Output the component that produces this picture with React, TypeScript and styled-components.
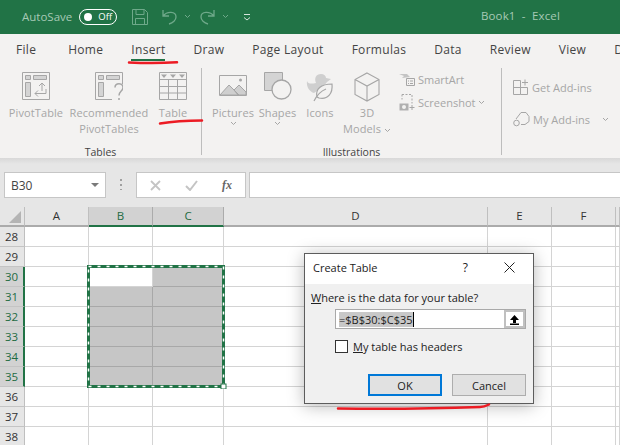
import React from 'react';
import styled, { createGlobalStyle } from 'styled-components';

const GlobalStyle = createGlobalStyle`
  * {
    margin: 0;
    padding: 0;
    box-sizing: border-box;
  }
  body {
    font-family: 'Open Sans', 'Noto Sans', sans-serif;
    background: #fff;
  }
`;

const Page = styled.div`
  position: relative;
  width: 620px;
  height: 445px;
  overflow: hidden;
  display: flex;
  flex-direction: column;
`;

const TitleBar = styled.div`
  height: 34px;
  flex: none;
  background: #217346;
  display: flex;
  align-items: center;
  padding-left: 22px;
  padding-bottom: 1px;
  color: #a6c9b5;
  font-size: 11.5px;
`;

const AutoSaveToggle = styled.div`
  width: 38px;
  height: 16px;
  margin-left: 7px;
  border: 1px solid #fff;
  border-radius: 8px;
  display: flex;
  align-items: center;
  padding-left: 4px;
  gap: 6px;
  color: #fff;
  font-size: 9.5px;
  &::before {
    content: '';
    width: 8px;
    height: 8px;
    border-radius: 50%;
    background: #fff;
  }
`;

const QuickIcon = styled.svg<{ $left: number }>`
  margin-left: ${(p) => p.$left}px;
  flex: none;
`;

const BookTitle = styled.div`
  margin-left: auto;
  margin-right: 60px;
  letter-spacing: 0.15px;
  white-space: pre;
  transform: translateY(-1px);
`;

const TabRow = styled.div`
  height: 31px;
  flex: none;
  background: #f3f2f1;
  display: flex;
  padding-left: 16px;
  gap: 28px;
  font-size: 12px;
  letter-spacing: 0.3px;
  color: #444;
  overflow: hidden;
`;

const Tab = styled.div<{ $active?: boolean; $gapAfter?: number }>`
  height: 27px;
  padding-top: 8px;
  line-height: 16px;
  white-space: nowrap;
  margin-right: ${(p) => p.$gapAfter ?? 0}px;
  ${(p) => p.$active && 'border-bottom: 2px solid #217346;'}
`;

const Ribbon = styled.div`
  height: 93px;
  flex: none;
  background: #f3f2f1;
  display: flex;
  padding-top: 3px;
  padding-bottom: 3px;
`;

const Group = styled.div<{ $w: number; $last?: boolean }>`
  width: ${(p) => p.$w}px;
  flex: none;
  display: flex;
  flex-direction: column;
  border-right: ${(p) => (p.$last ? 'none' : '1px solid #bdbdbd')};
`;

const GroupBody = styled.div<{ $left: number }>`
  flex: 1;
  display: flex;
  padding-left: ${(p) => p.$left}px;
  padding-top: 4px;
`;

const GroupLabel = styled.div`
  height: 12px;
  line-height: 18px;
  text-align: center;
  font-size: 10.5px;
  color: #444;
`;

const BigButton = styled.div<{ $w: number }>`
  width: ${(p) => p.$w}px;
  flex: none;
  display: flex;
  flex-direction: column;
  align-items: center;
  font-size: 11px;
  letter-spacing: 0.1px;
  line-height: 16px;
  color: #a6a6a6;
  text-align: center;
  white-space: nowrap;
`;

const BigIconSlot = styled.div`
  height: 30px;
  display: flex;
  justify-content: center;
  margin-bottom: 3px;
`;

const Chevron = styled.svg`
  vertical-align: middle;
`;

const SmallColumn = styled.div<{ $gap: number; $top: number; $left: number }>`
  display: flex;
  flex-direction: column;
  gap: ${(p) => p.$gap}px;
  margin-top: ${(p) => p.$top}px;
  padding-left: ${(p) => p.$left}px;
`;

const SmallButton = styled.div`
  height: 16px;
  display: flex;
  align-items: center;
  gap: 3px;
  font-size: 11px;
  color: #a6a6a6;
  white-space: nowrap;
`;

const FormulaArea = styled.div`
  height: 49px;
  flex: none;
  background: linear-gradient(#d8d8d8 0, #e6e6e6 6px);
  display: flex;
  padding: 14px 0 0 4px;
`;

const NameBox = styled.div`
  width: 102px;
  height: 26px;
  background: #fff;
  border: 1px solid #c6c6c6;
  display: flex;
  align-items: center;
  justify-content: space-between;
  padding: 0 6px 0 6px;
  font-size: 12px;
  color: #444;
  &::after {
    content: '';
    border-left: 4px solid transparent;
    border-right: 4px solid transparent;
    border-top: 4px solid #7a7a7a;
  }
`;

const Grip = styled.div`
  width: 2px;
  height: 11px;
  margin: 7px 14px 0 14px;
  background: repeating-linear-gradient(#a0a0a0 0 2px, transparent 2px 5px);
`;

const FormulaButtons = styled.div`
  width: 110px;
  height: 26px;
  background: #fff;
  border: 1px solid #c6c6c6;
  display: flex;
  align-items: center;
  padding-left: 13px;
  gap: 24px;
`;

const FxLabel = styled.span`
  font-family: 'Liberation Serif', serif;
  font-style: italic;
  font-weight: bold;
  font-size: 12px;
  color: #666;
`;

const FormulaInput = styled.div`
  flex: 1;
  height: 26px;
  margin-left: 3px;
  background: #fff;
  border: 1px solid #c6c6c6;
  border-right: none;
`;

const Sheet = styled.div`
  flex: 1;
  display: grid;
  grid-template-columns: 25px 64px 64px 71px 264px 64px 64px 4px;
  grid-auto-rows: 20px;
  background: #fff;
`;

const Corner = styled.div`
  background: #e6e6e6;
  border-right: 1px solid #bfbfbf;
  border-bottom: 2px solid #ababab;
  position: relative;
  &::after {
    content: '';
    position: absolute;
    right: 3px;
    bottom: 2px;
    border-left: 12px solid transparent;
    border-bottom: 12px solid #b4b4b4;
  }
`;

const ColHead = styled.div<{ $on?: boolean }>`
  background: ${(p) => (p.$on ? '#d2d2d2' : '#e6e6e6')};
  border-right: 1px solid ${(p) => (p.$on ? '#ababab' : '#bfbfbf')};
  border-bottom: 2px solid ${(p) => (p.$on ? '#217346' : '#ababab')};
  color: ${(p) => (p.$on ? '#1f6b42' : '#333')};
  font-size: 11.5px;
  line-height: 18px;
  text-align: center;
`;

const RowHead = styled.div<{ $on?: boolean }>`
  background: ${(p) => (p.$on ? '#d2d2d2' : '#e6e6e6')};
  border-right: ${(p) => (p.$on ? '2px solid #217346' : '1px solid #bfbfbf')};
  border-bottom: 1px solid #c4c4c4;
  color: ${(p) => (p.$on ? '#1f6b42' : '#333')};
  font-size: 11.5px;
  line-height: 20px;
  padding-left: 5px;
`;

const Cell = styled.div<{ $fill?: boolean }>`
  background: ${(p) => (p.$fill ? '#c6c6c6' : '#fff')};
  border-right: 1px solid ${(p) => (p.$fill ? '#a8a8a8' : '#d4d4d4')};
  border-bottom: 1px solid ${(p) => (p.$fill ? '#a8a8a8' : '#d4d4d4')};
`;

const Ants = styled.svg`
  position: absolute;
  left: 87px;
  top: 265px;
`;

const Dialog = styled.div`
  position: absolute;
  left: 304px;
  top: 253px;
  width: 230px;
  height: 151px;
  background: #f0f0f0;
  border: 1px solid #5c5c5c;
  box-shadow: 0 2px 16px rgba(0, 0, 0, 0.28);
  color: #222;
  font-size: 11px;
  display: flex;
  flex-direction: column;
`;

const DialogTitle = styled.div`
  height: 30px;
  background: #fff;
  flex: none;
  display: flex;
  align-items: center;
  padding: 0 18px 3px 8px;
  font-size: 11px;
`;

const Help = styled.span`
  margin-left: auto;
  margin-right: 36px;
  font-size: 12px;
`;

const DialogBody = styled.div`
  flex: 1;
  padding: 6px 7px 0 6px;
  display: flex;
  flex-direction: column;
`;

const Under = styled.span`
  text-decoration: underline;
`;

const RangeRow = styled.div`
  margin: 4px 0 0 24px;
  height: 20px;
  background: #fff;
  border: 1px solid #a9a9a9;
  display: flex;
  align-items: stretch;
`;

const RangeField = styled.div`
  flex: 1;
  padding: 2px 0 0 3px;
  line-height: 15px;
`;

const RangeSelected = styled.span`
  background: #c8c8c8;
  display: inline-block;
  height: 15px;
  border-right: 1px solid #000;
  white-space: nowrap;
`;

const CollapseButton = styled.div`
  width: 21px;
  background: #fff;
  border: 2px solid #c0c0c0;
  display: flex;
  align-items: center;
  justify-content: center;
`;

const CheckRow = styled.div`
  margin: 10px 0 0 24px;
  display: flex;
  align-items: center;
  gap: 5px;
`;

const CheckBox = styled.div`
  width: 13px;
  height: 13px;
  background: #fff;
  border: 1px solid #333;
`;

const DialogActions = styled.div`
  margin-top: 20px;
  display: flex;
  justify-content: flex-end;
  gap: 10px;
`;

const DialogButton = styled.div<{ $primary?: boolean }>`
  width: 74px;
  height: 22px;
  background: #e1e1e1;
  border: ${(p) => (p.$primary ? '2px solid #0078d7' : '1px solid #adadad')};
  display: flex;
  align-items: center;
  justify-content: center;
`;

const Scribble = styled.svg`
  position: absolute;
  left: 0;
  top: 0;
  pointer-events: none;
`;

const G = '#a6a6a6';

const Chev = ({ color = G }: { color?: string }) => (
  <Chevron width="7" height="5" viewBox="0 0 7 5">
    <path d="M1 1l2.5 2.5L6 1" fill="none" stroke={color} />
  </Chevron>
);

const PivotIcon = ({ help }: { help?: boolean }) => (
  <svg width="28" height="28" viewBox="0 0 28 28" fill="none" stroke={G}>
    <path d={help ? 'M27.5 12V.5H.5v27H17' : 'M.5.5h27v27H.5z'} />
    <path d="M3.5 3.5h5v4h-5zM11.5 3.5h13v4h-13zM3.5 10.5h5v14h-5z" fill="#d4d4d4" />
    {help ? (
      <path d="M20 15.5c0-5 8-5 8 0 0 3.5-4 3.5-4 8M24 26v2" strokeWidth="1.5" />
    ) : (
      <path d="M20 19v-8m-3 3l3-3 3 3M24 17v4.5h-11m3-3l-3 3 3 3" />
    )}
  </svg>
);

const TableIcon = () => (
  <svg width="28" height="28" viewBox="0 0 28 28" fill="none" stroke={G}>
    <path d="M.5.5h27v27H.5zM.5 7.5h27M.5 14.5h27M.5 21h27M9.5 7.5v20M18.5 7.5v20" />
    <path d="M2 2.5h6L5 6zM11 2.5h6L14 6zM20 2.5h6L23 6z" fill={G} stroke="none" />
  </svg>
);

const PictureIcon = () => (
  <svg width="28" height="28" viewBox="0 0 28 28" fill="none" stroke={G}>
    <path d="M.5 3.5h27v20H.5z" fill="#f3f2f1" />
    <path d="M1 23l9-10 10 10zM15 18l5-5 7 7v3h-8z" fill="#cfcfcf" />
    <circle cx="21.5" cy="8" r="1.5" fill={G} stroke="none" />
  </svg>
);

const ShapesIcon = () => (
  <svg width="28" height="28" viewBox="0 0 28 28" fill="none" stroke={G}>
    <path d="M.5.5h18v18H.5z" fill="#d4d4d4" />
    <circle cx="17.5" cy="17.5" r="9.5" fill="#f3f2f1" strokeWidth="1.3" />
  </svg>
);

const IconsIcon = () => (
  <svg width="28" height="30" viewBox="0 0 28 30" fill="none" stroke={G}>
    <path
      d="M1 9c1 3 4 3 9 2-2-5 0-9 5-9 3 0 5 2 5 4l5 1-4 3c-1 2-3 3-5 4-4 3-6 6-8 7-4-1-8-6-7-12z"
      fill="#cfcfcf"
      stroke="none"
    />
    <path d="M11 25c-2-8 4-13 15-13 1 9-4 16-13 14z" fill="#f3f2f1" strokeWidth="1.2" />
    <path d="M8 29c3-6 7-10 12-12" strokeWidth="1.2" />
  </svg>
);

const CubeIcon = () => (
  <svg width="26" height="30" viewBox="0 0 26 30" fill="none" stroke={G} strokeWidth="1.1">
    <path d="M13 1l12 6.5v15L13 29 1 22.5v-15zM1 7.5L13 14l12-6.5M13 14v15" />
  </svg>
);

const SmartArtIcon = () => (
  <svg width="16" height="13" viewBox="0 0 16 13" fill="none" stroke={G}>
    <path d="M0 1h8l3 3-8 1 2-2z" fill="#c4c4c4" stroke="none" />
    <path d="M7.5 5.5h8v7h-8zM9 8h1M11 8h3M9 10.5h1M11 10.5h3" />
  </svg>
);

const ScreenshotIcon = () => (
  <svg width="16" height="17" viewBox="0 0 16 17" fill="none" stroke={G}>
    <path d="M3 .5h10v9M3 .5v5" strokeDasharray="2 1.5" />
    <path d="M.5 9.5h9v7h-9z" fill="#b0b0b0" stroke="none" />
    <circle cx="5" cy="13" r="2" fill="#f3f2f1" stroke="none" />
    <path d="M13 11v5M10.5 13.5h5" />
  </svg>
);

const GetAddinsIcon = () => (
  <svg width="16" height="16" viewBox="0 0 16 16" fill="none" stroke={G}>
    <path d="M.5 1.5h7v14h-7zM.5 8.5h14v7h-7M7.5 8.5V3M12 .5v6M9 3.5h6" />
  </svg>
);

const MyAddinsIcon = () => (
  <svg width="17" height="16" viewBox="0 0 17 16" fill="none" stroke={G}>
    <path d="M3 8l5-6.5h5l3 4v5l-4 3H8" />
    <circle cx="3.5" cy="12" r="2.8" />
  </svg>
);

const columns = ['A', 'B', 'C', 'D', 'E', 'F'];
const rowNumbers = [28, 29, 30, 31, 32, 33, 34, 35, 36, 37, 38];

const isFilled = (row: number, col: string) =>
  row >= 30 && row <= 35 && (col === 'B' || col === 'C') && !(row === 30 && col === 'B');

export default function App() {
  return (
    <Page>
      <GlobalStyle />
      <TitleBar>
        AutoSave
        <AutoSaveToggle>Off</AutoSaveToggle>
        <QuickIcon $left={15} width="16" height="16" viewBox="0 0 16 16" fill="none" stroke="#6fa98a">
          <path d="M.5.5h12l3 3v12H.5zM4 .5v5h8v-5M3.5 15.5v-6h9v6" />
        </QuickIcon>
        <QuickIcon $left={14} width="15" height="16" viewBox="0 0 15 16" fill="none" stroke="#6fa98a" strokeWidth="1.3">
          <path d="M1 1v6h6M1 7c4-5 13-5 13 1 0 3-3 6-7 7" />
        </QuickIcon>
        <QuickIcon $left={7} width="7" height="5" viewBox="0 0 7 5" fill="none" stroke="#6fa98a">
          <path d="M1 1l2.5 2.5L6 1" />
        </QuickIcon>
        <QuickIcon $left={9} width="15" height="16" viewBox="0 0 15 16" fill="none" stroke="#6fa98a" strokeWidth="1.3">
          <path d="M14 1v6H8M14 7C10 2 1 2 1 8c0 3 3 6 7 7" />
        </QuickIcon>
        <QuickIcon $left={7} width="7" height="5" viewBox="0 0 7 5" fill="none" stroke="#6fa98a">
          <path d="M1 1l2.5 2.5L6 1" />
        </QuickIcon>
        <QuickIcon $left={14} width="8" height="8" viewBox="0 0 8 8" fill="none" stroke="#d5e5db">
          <path d="M1 1.5h6M1 4.5l3 2.5 3-2.5" />
        </QuickIcon>
        <BookTitle>Book1  -  Excel</BookTitle>
      </TitleBar>

      <TabRow>
        <Tab $gapAfter={4}>File</Tab>
        <Tab>Home</Tab>
        <Tab $active>Insert</Tab>
        <Tab>Draw</Tab>
        <Tab>Page Layout</Tab>
        <Tab>Formulas</Tab>
        <Tab>Data</Tab>
        <Tab>Review</Tab>
        <Tab>View</Tab>
        <Tab>Developer</Tab>
      </TabRow>

      <Ribbon>
        <Group $w={202}>
          <GroupBody $left={7}>
            <BigButton $w={58}>
              <BigIconSlot><PivotIcon /></BigIconSlot>
              PivotTable
            </BigButton>
            <BigButton $w={88}>
              <BigIconSlot><PivotIcon help /></BigIconSlot>
              Recommended
              <br />
              PivotTables
            </BigButton>
            <BigButton $w={40}>
              <BigIconSlot><TableIcon /></BigIconSlot>
              Table
            </BigButton>
          </GroupBody>
          <GroupLabel>Tables</GroupLabel>
        </Group>

        <Group $w={300}>
          <GroupBody $left={8}>
            <BigButton $w={46}>
              <BigIconSlot><PictureIcon /></BigIconSlot>
              Pictures
              <br />
              <Chev />
            </BigButton>
            <BigButton $w={43}>
              <BigIconSlot><ShapesIcon /></BigIconSlot>
              Shapes
              <br />
              <Chev />
            </BigButton>
            <BigButton $w={42}>
              <BigIconSlot><IconsIcon /></BigIconSlot>
              Icons
            </BigButton>
            <BigButton $w={52}>
              <BigIconSlot><CubeIcon /></BigIconSlot>
              3D
              <br />
              <span>Models <Chev /></span>
            </BigButton>
            <SmallColumn $gap={7} $top={-1} $left={6}>
              <SmallButton><SmartArtIcon />SmartArt</SmallButton>
              <SmallButton><ScreenshotIcon />Screenshot <Chev /></SmallButton>
            </SmallColumn>
          </GroupBody>
          <GroupLabel>Illustrations</GroupLabel>
        </Group>

        <Group $w={118} $last>
          <GroupBody $left={11}>
            <SmallColumn $gap={16} $top={7} $left={0}>
              <SmallButton><GetAddinsIcon />Get Add-ins</SmallButton>
              <SmallButton><MyAddinsIcon />My Add-ins&nbsp;&nbsp;&nbsp;<Chev /></SmallButton>
            </SmallColumn>
          </GroupBody>
        </Group>
      </Ribbon>

      <FormulaArea>
        <NameBox>B30</NameBox>
        <Grip />
        <FormulaButtons>
          <svg width="11" height="11" viewBox="0 0 11 11" fill="none" stroke="#c4c4c4" strokeWidth="1.8">
            <path d="M1 1l9 9M10 1l-9 9" />
          </svg>
          <svg width="13" height="11" viewBox="0 0 13 11" fill="none" stroke="#c4c4c4" strokeWidth="2">
            <path d="M1 6l4 4 7-9" />
          </svg>
          <FxLabel>fx</FxLabel>
        </FormulaButtons>
        <FormulaInput />
      </FormulaArea>

      <Sheet>
        <Corner />
        {columns.map((c) => (
          <ColHead key={c} $on={c === 'B' || c === 'C'}>{c}</ColHead>
        ))}
        <ColHead />
        {rowNumbers.map((r) => (
          <React.Fragment key={r}>
            <RowHead $on={r >= 30 && r <= 35}>{r}</RowHead>
            {columns.map((c) => (
              <Cell key={c} $fill={isFilled(r, c)} />
            ))}
            <Cell />
          </React.Fragment>
        ))}
      </Sheet>

      <Ants width="140" height="124" viewBox="0 0 140 124" fill="none">
        <rect x="1.5" y="1.5" width="135" height="120" stroke="#217346" strokeWidth="3" />
        <rect x="1.5" y="1.5" width="135" height="120" stroke="#fff" strokeWidth="1.5" strokeDasharray="3 6" />
        <rect x="134" y="119" width="5" height="5" fill="#fff" stroke="#217346" />
      </Ants>

      <Dialog>
        <DialogTitle>
          Create Table
          <Help>?</Help>
          <svg width="11" height="11" viewBox="0 0 11 11" fill="none" stroke="#222">
            <path d="M.5.5l10 10M10.5.5l-10 10" />
          </svg>
        </DialogTitle>
        <DialogBody>
          <div><Under>W</Under>here is the data for your table?</div>
          <RangeRow>
            <RangeField><RangeSelected>=$B$30:$C$35</RangeSelected></RangeField>
            <CollapseButton>
              <svg width="11" height="11" viewBox="0 0 11 11" fill="#000">
                <path d="M5.5 1L10 6H7v3H4V6H1zM1 9.5h9V11H1z" />
              </svg>
            </CollapseButton>
          </RangeRow>
          <CheckRow>
            <CheckBox />
            <span><Under>M</Under>y table has headers</span>
          </CheckRow>
          <DialogActions>
            <DialogButton $primary>OK</DialogButton>
            <DialogButton>Cancel</DialogButton>
          </DialogActions>
        </DialogBody>
      </Dialog>

      <Scribble width="620" height="445" viewBox="0 0 620 445" fill="none" stroke="#ec1c24" strokeWidth="2.5" strokeLinecap="round">
        <path d="M129 62.5c16 .8 32 .8 48-.2" />
        <path d="M160 123.5c12-2 28-3 42-3" />
        <path d="M338 408.5c50 .6 100 0 142-1.5 4 0 6-1 9-2.5" />
      </Scribble>
    </Page>
  );
}
